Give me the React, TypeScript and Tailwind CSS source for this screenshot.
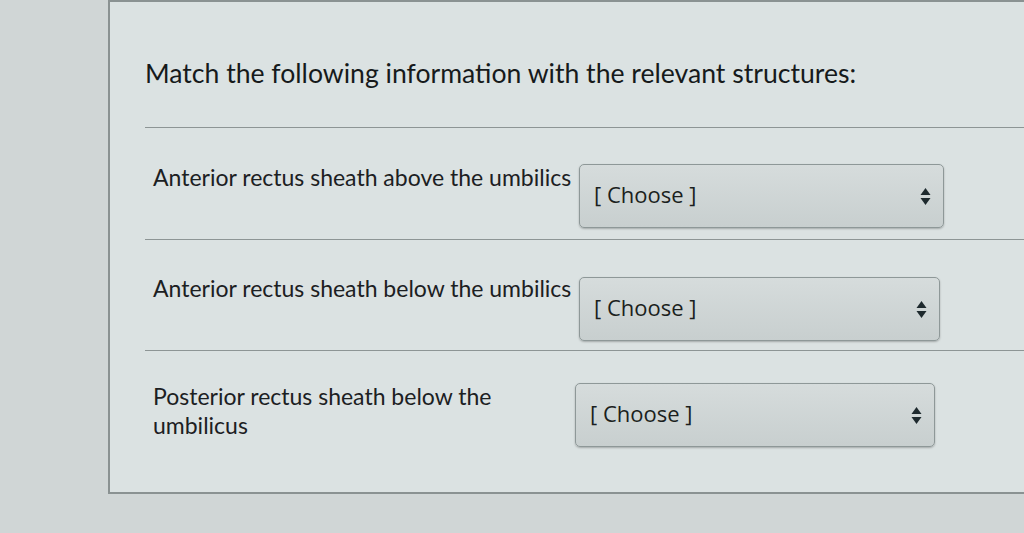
import React from "react";

function Arrows() {
  return (
    <svg width="11" height="19" viewBox="0 0 11 19" className="shrink-0">
      <path d="M5.5 1 L10.5 8 L0.5 8 Z" fill="#1e2a2e" />
      <path d="M5.5 18 L10.5 11 L0.5 11 Z" fill="#1e2a2e" />
    </svg>
  );
}

function Select({ w }: { w: string }) {
  return (
    <div
      className={`${w} h-[64px] rounded-[5px] border border-[#8e9898] bg-gradient-to-b from-[#d6dcdc] to-[#c8cfcf] shadow-[0_1px_2px_rgba(0,0,0,0.25)] flex items-center justify-between pl-[14px] pr-[12px]`}
    >
      <span
        className="text-[22px] leading-none text-[#1b1f20] -mt-[4px]"
        style={{ fontFamily: '"Open Sans", "Noto Sans", sans-serif' }}
      >
        [ Choose ]
      </span>
      <Arrows />
    </div>
  );
}

export default function App() {
  return (
    <div
      className="w-[1024px] h-[533px] overflow-hidden bg-[#d0d6d6]"
      style={{ fontFamily: 'Lato, "Liberation Sans", sans-serif' }}
    >
      <div className="ml-[108px] w-[916px] h-[494px] border-l-2 border-t-2 border-b-2 border-[#8a9292] bg-[#dbe2e2] pl-[35px] pt-[55px]">
        <h1 className="text-[26.6px] leading-[32px] text-[#161a1b] font-normal">
          Match the following information with the relevant structures:
        </h1>
        <div className="mt-[38px] border-t border-[#8d9595]">
          <div className="flex items-start pt-[36px] pb-[11px] border-b border-[#8d9595]">
            <div className="w-[434px] pl-[8px] -mt-[1px] text-[23px] leading-[29px] text-[#1c2022]">
              Anterior rectus sheath above the umbilics
            </div>
            <Select w="w-[365px]" />
          </div>
          <div className="flex items-start pt-[37px] pb-[9px] border-b border-[#8d9595]">
            <div className="w-[434px] pl-[8px] -mt-[3px] text-[23px] leading-[29px] text-[#1c2022]">
              Anterior rectus sheath below the umbilics
            </div>
            <Select w="w-[361px]" />
          </div>
          <div className="flex items-start pt-[32px]">
            <div className="w-[430px] pl-[8px] -mt-[1px] text-[23px] leading-[29px] text-[#1c2022]">
              Posterior rectus sheath below the
              <br />
              umbilicus
            </div>
            <Select w="w-[360px]" />
          </div>
        </div>
      </div>
    </div>
  );
}
